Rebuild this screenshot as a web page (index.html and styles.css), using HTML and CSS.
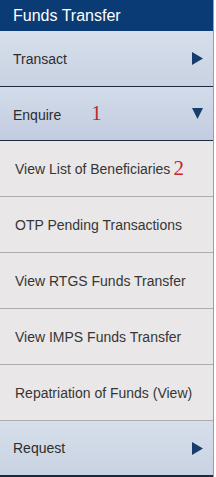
FILE: index.html
```html
<!DOCTYPE html>
<html lang="en">
<head>
    <meta charset="UTF-8">
    <meta name="viewport" content="width=device-width, initial-scale=1.0">
    <title>Funds Transfer</title>
    <link rel="stylesheet" href="styles.css">
</head>
<body>
    <aside class="side-menu">
        <div class="menu-title">Funds Transfer</div>

        <a href="#" class="menu-group group-transact">
            <span>Transact</span>
            <svg class="arrow" width="11" height="13" viewBox="0 0 11 13"><polygon points="0,0 11,6.5 0,13" /></svg>
        </a>

        <a href="#" class="menu-group group-enquire open">
            <span>Enquire <span class="note note-one">1</span></span>
            <svg class="arrow" width="11" height="11" viewBox="0 0 11 11"><polygon points="0,0 11,0 5.5,11" /></svg>
        </a>

        <ul class="sub-menu">
            <li><a href="#">View List of Beneficiaries<span class="note note-two">2</span></a></li>
            <li><a href="#">OTP Pending Transactions</a></li>
            <li><a href="#">View RTGS Funds Transfer</a></li>
            <li><a href="#">View IMPS Funds Transfer</a></li>
            <li><a href="#">Repatriation of Funds (View)</a></li>
        </ul>

        <a href="#" class="menu-group group-request">
            <span>Request</span>
            <svg class="arrow" width="11" height="13" viewBox="0 0 11 13"><polygon points="0,0 11,6.5 0,13" /></svg>
        </a>
    </aside>
</body>
</html>
```

FILE: styles.css
```css
/* General Reset */
* { margin: 0; padding: 0; box-sizing: border-box; }
body { font-family: "Liberation Sans", Arial, sans-serif; background: #fff; width: 216px; overflow: hidden; }
.side-menu { width: 214px; border-right: 1px solid #9c9ea3; }
.menu-title { height: 31px; line-height: 31px; padding-left: 13px; background-color: #0b3b74; color: #fff; font-size: 16px; }
.menu-group { display: flex; justify-content: space-between; align-items: center; padding: 0 10px 0 13px; background: linear-gradient(#d7dfeb, #c8d2e2); border-bottom: 1px solid #1c2a3c; color: #2d2d2d; font-size: 14px; text-decoration: none; }
.group-transact { height: 56px; }
.group-enquire { height: 54px; }
.group-enquire.open { background: linear-gradient(#d2dbe9, #c3cde0); }
.group-request { height: 56px; border-bottom-width: 2px; }
.arrow { fill: #163d6b; flex-shrink: 0; }
.sub-menu { list-style: none; }
.sub-menu li { height: 56px; background-color: #e9e7e7; border-bottom: 1px solid #adabae; }
.sub-menu a { display: flex; align-items: center; height: 100%; padding-left: 15px; color: #363636; font-size: 14px; text-decoration: none; }
.note { font-family: "Liberation Serif", "Times New Roman", serif; color: #c3262d; font-size: 21px; line-height: 1; }
.note-one { margin-left: 26px; }
.note-two { margin-left: 3px; }
```
